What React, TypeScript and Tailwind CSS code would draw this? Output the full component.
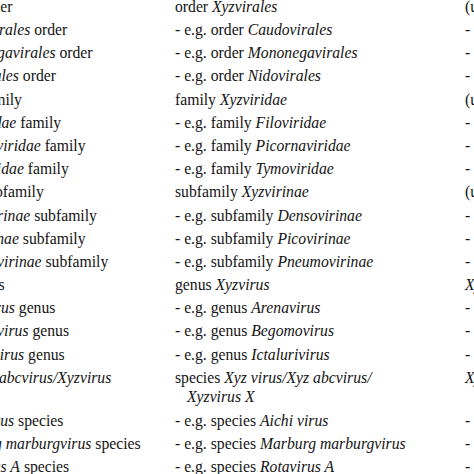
import React from "react";

type Row = { a: React.ReactNode; b: React.ReactNode; c: React.ReactNode };

const rank = (name: string, r: string, eg = false) =>
  eg ? (
    <>
      - e.g. <i>{name}</i> {r}
    </>
  ) : (
    <>
      <i>{name}</i> {r}
    </>
  );

const rankB = (name: string, r: string, eg = false) =>
  eg ? (
    <>
      - e.g. {r} <i>{name}</i>
    </>
  ) : (
    <>
      {r} <i>{name}</i>
    </>
  );

const groups: [string, string[], string][] = [
  ["order", ["Xyzvirales", "Caudovirales", "Mononegavirales", "Nidovirales"], "(unchanged)"],
  ["family", ["Xyzviridae", "Filoviridae", "Picornaviridae", "Tymoviridae"], "(unchanged)"],
  ["subfamily", ["Xyzvirinae", "Densovirinae", "Picovirinae", "Pneumovirinae"], "(unchanged)"],
  ["genus", ["Xyzvirus", "Arenavirus", "Begomovirus", "Ictalurivirus"], "Xyzvirus"],
];

const rows: Row[] = [];
groups.forEach(([r, names, head]) => {
  names.forEach((n, i) => {
    rows.push({
      a: rank(n, r, i > 0),
      b: rankB(n, r, i > 0),
      c: i === 0 ? (head.startsWith("(") ? head : <i>{head}</i>) : "- unchanged",
    });
  });
});

rows.push({
  a: (
    <>
      <i>Xyz virus/Xyz abcvirus/Xyzvirus</i>
      <br />
      <i>X</i> species
    </>
  ),
  b: (
    <>
      species <i>Xyz virus/Xyz abcvirus/</i>
      <br />
      <span className="pl-[12px]">
        <i>Xyzvirus X</i>
      </span>
    </>
  ),
  c: <i>Xyzvirus xyzi</i>,
});
rows.push({ a: rank("Aichi virus", "species", true), b: rankB("Aichi virus", "species", true), c: "- unchanged" });
rows.push({
  a: rank("Marburg marburgvirus", "species", true),
  b: rankB("Marburg marburgvirus", "species", true),
  c: "- unchanged",
});
rows.push({ a: rank("Rotavirus A", "species", true), b: rankB("Rotavirus A", "species", true), c: "- unchanged" });

export default function App() {
  return (
    <div className="w-[474px] h-[474px] overflow-hidden bg-white">
      <div
        className="-ml-[90px] -mt-[5px] text-[15.7px] leading-[19.5px] text-[#141414]"
        style={{ fontFamily: '"Liberation Serif", "Times New Roman", serif' }}
      >
        {rows.map((row, i) => (
          <div key={i} className="flex py-[1.85px]">
            <div className="w-[265px] shrink-0 whitespace-nowrap">{row.a}</div>
            <div className="w-[290px] shrink-0 whitespace-nowrap">{row.b}</div>
            <div className="shrink-0 whitespace-nowrap">{row.c}</div>
          </div>
        ))}
      </div>
    </div>
  );
}
